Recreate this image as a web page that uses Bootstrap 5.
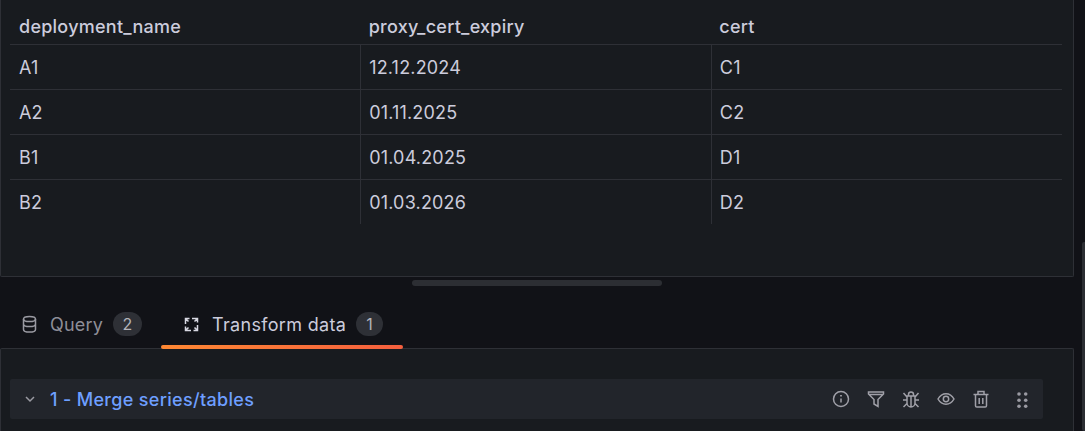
<!DOCTYPE html>
<html lang="en">
<head>
    <meta charset="UTF-8">
    <meta name="viewport" content="width=device-width, initial-scale=1.0">
    <title>Transform data</title>
    <link href="https://cdn.jsdelivr.net/npm/bootstrap@5.3.0/dist/css/bootstrap.min.css" rel="stylesheet">
    <style>
        html, body { height: 431px; overflow: hidden; }
        body { background: #111217; font-family: Inter, "Noto Sans", sans-serif; font-size: 18px; letter-spacing: .01em; color: #ccccdc; }
        .main-col { width: 1074px; }
        .viz-panel { height: 277px; background: #181b1f; border: 1px solid #2e3036; border-top: 0; border-radius: 0 0 2px 2px; padding: 0 10px 0 9px; }
        .data-table { table-layout: fixed; width: 1052px; border-collapse: collapse; }
        .data-table th { height: 44px; padding: 9px 8px 0; font-weight: 500; letter-spacing: .014em; color: #ccccdc; border-bottom: 1px solid #2e3036; }
        .data-table td { height: 45px; padding: 1px 8px 0; color: #ccccdc; border-bottom: 1px solid #2e3036; border-right: 1px solid #2e3036; }
        .data-table th:first-child, .data-table td:first-child { padding-left: 9px; }
        .data-table tr:last-child td { border-bottom: 0; }
        .data-table td:last-child { border-right: 0; }
        .split-bar { height: 12px; }
        .split-handle { width: 250px; height: 6px; background: #2c2e33; border-radius: 3px; margin-left: 412px; }
        .tab-row { height: 59px; padding-top: 23px; }
        .tab-item { height: 36px; padding-bottom: 12px; color: #8e8e97; }
        .tab-query { width: 161px; padding-left: 22px; }
        .tab-query .tab-label { margin-left: 13px; letter-spacing: .01em; }
        .tab-query .tab-count { padding: 0 9.5px; }
        .tab-transform { width: 242px; padding-left: 22px; color: #ccccdc; position: relative; }
        .tab-transform::after { content: ""; position: absolute; left: 0; right: 0; bottom: -1px; height: 4px; border-radius: 2px; background: linear-gradient(90deg, #ff8833, #f55f3e); }
        .tab-label { margin-left: 12px; letter-spacing: .018em; }
        .tab-count { height: 24px; min-width: 27px; padding: 0 10px; border-radius: 12px; background: #2e3036; font-size: 16px; color: #b4b4bb; margin-left: 10px; }
        .editor-box { height: 84px; background: #181b1f; border: 1px solid #2e3036; border-bottom: 0; border-radius: 2px 2px 0 0; padding: 30px 30px 0 9px; }
        .merge-row { height: 40px; background: #22252b; border-radius: 2px; padding: 0 15px 0 14px; }
        .merge-title { color: #6e9fff; font-weight: 500; letter-spacing: .018em; margin-left: 14px; }
        .merge-actions { gap: 17px; }
        .merge-actions svg { display: block; }
        .drag-dots { margin-left: 9px; }
        .side-scroll { position: absolute; left: 1082px; top: 242px; width: 3px; height: 189px; background: #2c2e33; border-radius: 2px 0 0 2px; }
    </style>
</head>
<body class="position-relative">
<div class="main-col">
    <div class="viz-panel">
        <table class="data-table">
            <thead>
            <tr>
                <th>deployment_name</th>
                <th>proxy_cert_expiry</th>
                <th>cert</th>
            </tr>
            </thead>
            <tbody>
            <tr><td>A1</td><td>12.12.2024</td><td>C1</td></tr>
            <tr><td>A2</td><td>01.11.2025</td><td>C2</td></tr>
            <tr><td>B1</td><td>01.04.2025</td><td>D1</td></tr>
            <tr><td>B2</td><td>01.03.2026</td><td>D2</td></tr>
            </tbody>
        </table>
    </div>

    <div class="split-bar d-flex align-items-center"><div class="split-handle"></div></div>

    <div class="tab-row d-flex">
        <div class="tab-item tab-query d-flex align-items-center">
            <svg width="15" height="18" viewBox="0 0 15 18" fill="none" stroke="#9a9aa2" stroke-width="1.5">
                <ellipse cx="7.500" cy="4" rx="6" ry="2.6"/>
                <path d="M1.500 4v10.500c0 1.400 2.700 2.600 6 2.600s6-1.200 6-2.600V4M1.500 9c0 1.400 2.700 2.600 6 2.600s6-1.200 6-2.600"/>
            </svg>
            <span class="tab-label">Query</span>
            <span class="tab-count d-inline-flex align-items-center justify-content-center">2</span>
        </div>
        <div class="tab-item tab-transform d-flex align-items-center">
            <svg width="17" height="17" viewBox="0 0 17 17" fill="none" stroke="#d8d8e2" stroke-width="1.500">
                <path d="M2.500 8V2.500H6.500M2.500 2.500l3 3M9 2.500h5.500V6.500M14.500 2.500l-3 3M14.500 9v5.500H10.500M14.500 14.500l-3-3M8 14.500H2.500V10.500M2.500 14.500l3-3"/>
            </svg>
            <span class="tab-label">Transform data</span>
            <span class="tab-count d-inline-flex align-items-center justify-content-center">1</span>
        </div>
    </div>

    <div class="editor-box">
        <div class="merge-row d-flex align-items-center justify-content-between">
            <div class="d-flex align-items-center">
                <svg width="12" height="12" viewBox="0 0 12 12" fill="none" stroke="#9a9aa2" stroke-width="1.500"><path d="M2 4l4 4 4-4"/></svg>
                <span class="merge-title">1 - Merge series/tables</span>
            </div>
            <div class="merge-actions d-flex align-items-center">
                <svg width="18" height="18" viewBox="0 0 18 18" fill="none" stroke="#a0a0a8" stroke-width="1.500">
                    <circle cx="9" cy="9" r="7.500"/><path d="M9 8.500v4"/><path d="M9 5v1.500" stroke-width="1.800"/>
                </svg>
                <svg width="18" height="18" viewBox="0 0 18 18" fill="none" stroke="#a0a0a8" stroke-width="1.500">
                    <path d="M1.500 2h15v2l-5.500 5.500v7l-4-2.500V9.500L1.500 4zM2 4.500h14"/>
                </svg>
                <svg width="18" height="18" viewBox="0 0 18 18" fill="none" stroke="#a0a0a8" stroke-width="1.500">
                    <path d="M5 6h8v7a4 4 0 0 1-8 0zM6.500 6V4.500a2.500 2.500 0 0 1 5 0V6M9 6v11M1.500 3l3.500 4M16.500 3l-3.500 4M1 10h4M17 10h-4M1.500 17l3.500-3.500M16.500 17L13 13.500"/>
                </svg>
                <svg width="18" height="18" viewBox="0 0 18 18" fill="none" stroke="#a0a0a8" stroke-width="1.500">
                    <path d="M1 9c2-3.500 4.800-5.200 8-5.200S15 5.500 17 9c-2 3.500-4.800 5.200-8 5.200S3 12.500 1 9z"/><circle cx="9" cy="9" r="2.700"/>
                </svg>
                <svg width="18" height="18" viewBox="0 0 18 18" fill="none" stroke="#a0a0a8" stroke-width="1.500">
                    <path d="M1.500 4.500h15M6 4.500V1.500h6v3M3.500 4.500v11.200c0 .7.500 1.300 1.300 1.300h8.400c.8 0 1.300-.6 1.300-1.300V4.500M7.200 8v6M10.800 8v6"/>
                </svg>
                <svg class="drag-dots" width="12" height="18" viewBox="0 0 12 18" fill="#9a9aa2">
                    <circle cx="3" cy="4" r="1.800"/><circle cx="9.700" cy="4" r="1.800"/>
                    <circle cx="3" cy="10.300" r="1.800"/><circle cx="9.700" cy="10.300" r="1.800"/>
                    <circle cx="3" cy="16.200" r="1.800"/><circle cx="9.700" cy="16.200" r="1.800"/>
                </svg>
            </div>
        </div>
    </div>
</div>
<div class="side-scroll"></div>
<script src="https://cdn.jsdelivr.net/npm/bootstrap@5.3.0/dist/js/bootstrap.bundle.min.js"></script>
</body>
</html>
